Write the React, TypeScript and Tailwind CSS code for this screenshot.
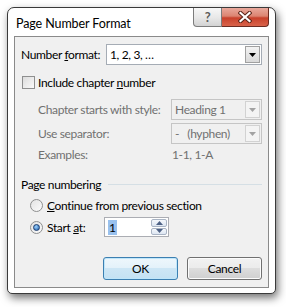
import React from 'react';

const font = { fontFamily: 'Lato, "Liberation Sans", sans-serif' };

function Arrow({ color = '#000' }: { color?: string }) {
  return (
    <svg width="7" height="4" viewBox="0 0 7 4">
      <path d="M0 0h7L3.5 4z" fill={color} />
    </svg>
  );
}

function Combo({ value, width, disabled }: { value: string; width: string; disabled?: boolean }) {
  return (
    <div
      className={`${width} flex h-[21px] items-center border ${disabled ? 'border-[#c5c5c5] bg-[#f0f0f0] text-[#707070]' : 'border-[#a5acb5] bg-white text-black'}`}
    >
      <span className="flex-1 truncate whitespace-pre pl-[3px]">{value}</span>
      <div
        className={`mr-px flex h-[17px] w-[15px] items-center justify-center border ${disabled ? 'border-[#d2d2d2] bg-[#f4f4f4]' : 'border-[#a0a0a0] bg-gradient-to-b from-[#f3f3f3] to-[#d9d9d9]'}`}
      >
        <Arrow color={disabled ? '#a3a3a3' : '#000'} />
      </div>
    </div>
  );
}

function Radio({ checked }: { checked?: boolean }) {
  return (
    <div className="flex h-[13px] w-[13px] items-center justify-center rounded-full border border-[#8e8f8f] bg-gradient-to-br from-[#e3e3e3] to-[#fbfbfb]">
      {checked && (
        <div className="h-[7px] w-[7px] rounded-full border border-[#1b3c6e] bg-[radial-gradient(circle_at_40%_35%,#9cd2ff,#1a5aa6)]" />
      )}
    </div>
  );
}

export default function App() {
  return (
    <div className="h-[307px] w-[286px] whitespace-nowrap bg-white pl-[7px] pt-[7px] text-[12px] leading-[15px] tracking-[-0.35px]" style={font}>
      <div className="flex h-[287px] w-[269px] flex-col rounded-t-[7px] rounded-b-[5px] border border-[#3a3a3a] bg-white px-[6px] pb-[5px] shadow-[2px_4px_9px_rgba(0,0,0,0.55)]">
        {/* title bar */}
        <div className="flex h-[28px] items-start justify-between">
          <span className="ml-[2px] mt-[8px] text-[12.5px] tracking-[-0.1px] text-black">Page Number Format</span>
          <div className="flex h-[19px]">
            <div className="flex w-[29px] items-center justify-center rounded-bl-[4px] border border-t-0 border-[#7c7c7c] bg-gradient-to-b from-[#f7f7f7] via-[#e9e9e9] to-[#d3d3d3] text-[13px] font-bold text-[#5c5c5c]">
              ?
            </div>
            <div className="flex w-[47px] items-center justify-center rounded-br-[4px] border border-l-0 border-t-0 border-[#6b2a20] bg-[linear-gradient(#e9a99c,#dc8471_45%,#c8412b_55%,#d9634a)]">
              <svg width="14" height="12" viewBox="0 0 14 12">
                <path d="M2.5 2l9 8M11.5 2l-9 8" stroke="#5a2418" strokeWidth="4.2" strokeLinecap="square" />
                <path d="M2.5 2l9 8M11.5 2l-9 8" stroke="#fff" strokeWidth="2.2" strokeLinecap="square" />
              </svg>
            </div>
          </div>
        </div>

        {/* content panel */}
        <div className="flex flex-1 flex-col border border-[#8a8a8a] bg-[#f0f0f0] px-[6px] pb-[7px]">
          <div className="mt-[7px] flex h-[21px] items-center justify-between">
            <span>
              Number <span className="underline">f</span>ormat:
            </span>
            <Combo value="1, 2, 3, …" width="w-[156px]" />
          </div>

          <div className="mt-[11px] flex h-[13px] items-center">
            <div className="ml-px h-[13px] w-[13px] border border-[#8e8f8f] bg-gradient-to-br from-[#dcdcdc] to-[#fafafa]" />
            <span className="ml-[3px]">
              Include chapter <span className="underline">n</span>umber
            </span>
          </div>

          <div className="mt-[10px] flex h-[21px] items-center justify-between text-[#707070]">
            <span className="pl-[17px]">Chapter starts with style:</span>
            <Combo value="Heading 1" width="w-[91px]" disabled />
          </div>

          <div className="mt-[3px] flex h-[21px] items-center justify-between text-[#707070]">
            <span className="pl-[17px]">Use separator:</span>
            <Combo value="-   (hyphen)" width="w-[91px]" disabled />
          </div>

          <div className="mt-[3px] flex h-[15px] items-center justify-between text-[#707070]">
            <span className="pl-[17px]">Examples:</span>
            <span className="w-[91px] pl-px">1-1, 1-A</span>
          </div>

          <div className="mt-[15px] flex h-[15px] items-center">
            <span>Page numbering</span>
            <div className="ml-[7px] h-px flex-1 bg-[#d5dfe5]" />
          </div>

          <div className="mt-[6px] flex h-[15px] items-center pl-[9px]">
            <Radio />
            <span className="ml-[4px]">
              <span className="underline">C</span>ontinue from previous section
            </span>
          </div>

          <div className="mt-[4px] flex h-[20px] items-center pl-[9px]">
            <Radio checked />
            <span className="ml-[4px] w-[57px]">
              Start <span className="underline">a</span>t:
            </span>
            <div className="flex h-[20px] w-[65px] items-center border border-[#abadb3] bg-white pl-[3px]">
              <span className="bg-[#99c1ee] px-px">1</span>
              <div className="ml-auto mr-px flex h-[16px] w-[16px] flex-col gap-px">
                <div className="flex flex-1 items-center justify-center rounded-[2px] border border-[#a9b4c4] bg-gradient-to-b from-[#f5f8fc] to-[#dde6f2]">
                  <svg width="7" height="4" viewBox="0 0 7 4"><path d="M0 4h7L3.5 0z" fill="#4d6185" /></svg>
                </div>
                <div className="flex flex-1 items-center justify-center rounded-[2px] border border-[#a9b4c4] bg-gradient-to-b from-[#f5f8fc] to-[#dde6f2]">
                  <svg width="7" height="4" viewBox="0 0 7 4"><path d="M0 0h7L3.5 4z" fill="#4d6185" /></svg>
                </div>
              </div>
            </div>
          </div>

          <div className="mt-[20px] flex h-[23px] justify-end gap-[9px]">
            <button className="w-[75px] rounded-[3px] border border-[#3c7fb1] bg-[linear-gradient(#eef7fc,#e3f1fa_50%,#cde6f5_50%,#c4e1f3)] shadow-[inset_0_0_0_1px_#bfe6fa] text-black">
              OK
            </button>
            <button className="w-[75px] rounded-[3px] border border-[#707070] bg-[linear-gradient(#f2f2f2,#ebebeb_50%,#dddddd_50%,#cfcfcf)] shadow-[inset_0_0_0_1px_#fcfcfc] text-black">
              Cancel
            </button>
          </div>
        </div>
      </div>
    </div>
  );
}
